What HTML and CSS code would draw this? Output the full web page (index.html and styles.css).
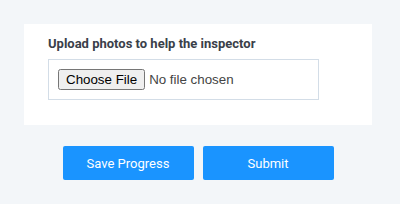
FILE: index.html
```html
<!DOCTYPE html>
<html lang="en">
<head>
    <meta charset="UTF-8">
    <meta name="viewport" content="width=device-width, initial-scale=1.0">
    <title>Inspection photos</title>
    <link rel="stylesheet" href="styles.css">
</head>
<body>
    <!-- Карточка загрузки -->
    <div class="card">
        <label class="card-title" for="photos">Upload photos to help the inspector</label>
        <div class="file-box">
            <input type="file" id="photos" class="file-input">
        </div>
    </div>

    <!-- Кнопки -->
    <div class="actions">
        <button class="btn">Save Progress</button>
        <button class="btn">Submit</button>
    </div>
</body>
</html>
```

FILE: styles.css
```css
body {
    font-family: 'Roboto', 'Liberation Sans', sans-serif;
    margin: 0;
    padding: 24px 28px 24px 24px;
    background: #f3f6f9;
}

/* Карточка */
.card {
    background: #fff;
    padding: 10px 24px 25px;
}

.card-title {
    display: block;
    font-size: 13px;
    font-weight: bold;
    color: #3a4049;
    line-height: 20px;
    margin-bottom: 5px;
}

.file-box {
    width: 251px;
    padding: 9px;
    border: 1px solid #d3dde7;
}

.file-input {
    font-family: 'Liberation Sans', Arial, sans-serif;
    color: #444;
}

/* Кнопки */
.actions {
    display: flex;
    justify-content: center;
    gap: 9px;
    margin-top: 21px;
}

.btn {
    width: 131px;
    height: 34px;
    border: none;
    border-radius: 2px;
    background: #1a94ff;
    color: #fff;
    font-family: 'Roboto', sans-serif;
    font-size: 13px;
    cursor: pointer;
}
```
